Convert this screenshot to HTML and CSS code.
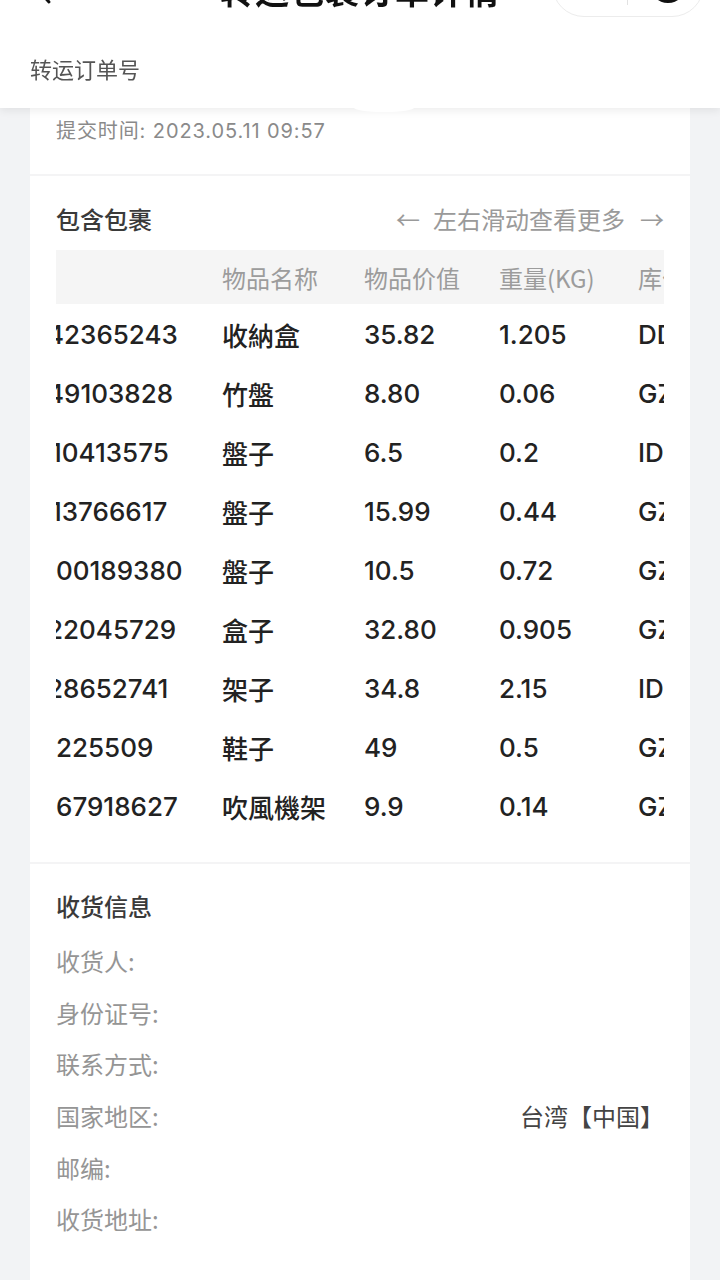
FILE: index.html
```html
<!DOCTYPE html>
<html lang="zh-CN">
<head>
<meta charset="utf-8">
<title>转运订单详情</title>
<link rel="stylesheet" href="styles.css">
</head>
<body>
<header class="topbar">
  <div class="nav">
    <svg class="back" width="24" height="40" viewBox="0 0 24 40"><path d="M17 8 L6 20 L17 32" fill="none" stroke="#111" stroke-width="3" stroke-linecap="round" stroke-linejoin="round"/></svg>
    <h1 class="nav-title">转运包裹订单详情</h1>
    <div class="capsule">
      <span class="cap-dots"><i></i><i class="big"></i><i></i></span>
      <span class="cap-sep"></span>
      <span class="cap-ring"><i></i></span>
    </div>
  </div>
  <div class="order-no">转运订单号</div>
  <span class="pull"></span>
</header>

<main class="card">
  <section class="sec sec-time">
    <p class="time">提交时间: 2023.05.11 09:57</p>
  </section>

  <section class="sec sec-pkg">
    <div class="sec-head">
      <h2 class="sec-title">包含包裹</h2>
      <span class="hint"><span class="arr">←</span>左右滑动查看更多<span class="arr">→</span></span>
    </div>
    <div class="tbl-wrap">
      <div class="tbl">
        <div class="th th-id"></div><div class="th">物品名称</div><div class="th">物品价值</div><div class="th">重量(KG)</div><div class="th">库位</div>

        <div class="td td-id">42365243</div><div class="td">收納盒</div><div class="td">35.82</div><div class="td">1.205</div><div class="td">DD</div>
        <div class="td td-id">49103828</div><div class="td">竹盤</div><div class="td">8.80</div><div class="td">0.06</div><div class="td">GZ</div>
        <div class="td td-id part">10413575</div><div class="td">盤子</div><div class="td">6.5</div><div class="td">0.2</div><div class="td">ID</div>
        <div class="td td-id part">13766617</div><div class="td">盤子</div><div class="td">15.99</div><div class="td">0.44</div><div class="td">GZ</div>
        <div class="td td-id full">00189380</div><div class="td">盤子</div><div class="td">10.5</div><div class="td">0.72</div><div class="td">GZ</div>
        <div class="td td-id">22045729</div><div class="td">盒子</div><div class="td">32.80</div><div class="td">0.905</div><div class="td">GZ</div>
        <div class="td td-id">28652741</div><div class="td">架子</div><div class="td">34.8</div><div class="td">2.15</div><div class="td">ID</div>
        <div class="td td-id full">225509</div><div class="td">鞋子</div><div class="td">49</div><div class="td">0.5</div><div class="td">GZ</div>
        <div class="td td-id full">67918627</div><div class="td">吹風機架</div><div class="td">9.9</div><div class="td">0.14</div><div class="td">GZ</div>
      </div>
    </div>
  </section>

  <section class="sec sec-recv">
    <h2 class="sec-title">收货信息</h2>
    <div class="fields">
      <div class="field"><span class="label">收货人:</span><span class="value"></span></div>
      <div class="field"><span class="label">身份证号:</span><span class="value"></span></div>
      <div class="field"><span class="label">联系方式:</span><span class="value"></span></div>
      <div class="field"><span class="label">国家地区:</span><span class="value">台湾【中国】</span></div>
      <div class="field"><span class="label">邮编:</span><span class="value"></span></div>
      <div class="field"><span class="label">收货地址:</span><span class="value"></span></div>
    </div>
  </section>
</main>
</body>
</html>
```

FILE: styles.css
```css
* { box-sizing: border-box; }

html, body {
  margin: 0;
  padding: 0;
}

body {
  background: #f2f3f5;
  font-family: "Inter", "Noto Sans CJK SC", sans-serif;
  color: #222;
  width: 720px;
  height: 1280px;
  overflow: hidden;
}

/* ---------- top bar ---------- */
.topbar {
  position: sticky;
  top: 0;
  z-index: 10;
  display: flow-root;
  background: #fff;
  height: 108px;
  box-shadow: 0 3px 8px rgba(0, 0, 0, 0.07);
}

.nav {
  position: relative;
  height: 40px;
  margin-top: -30px;
  display: flex;
  align-items: center;
  justify-content: center;
}

.back {
  position: absolute;
  left: 32px;
  top: 0;
}

.nav-title {
  margin: 0;
  font-family: "Noto Sans CJK SC", sans-serif;
  font-size: 34px;
  line-height: 40px;
  font-weight: 700;
  color: #111;
  letter-spacing: 1px;
}

.capsule {
  position: absolute;
  right: 16px;
  bottom: -7px;
  width: 152px;
  height: 64px;
  border: 1px solid #ececec;
  border-radius: 32px;
  background: #fff;
  display: flex;
  align-items: center;
}

.cap-dots {
  width: 74px;
  display: flex;
  justify-content: center;
  align-items: center;
  gap: 7px;
}
.cap-dots i {
  width: 7px;
  height: 7px;
  border-radius: 50%;
  background: #111;
}
.cap-dots i.big {
  width: 11px;
  height: 11px;
}

.cap-sep {
  width: 1px;
  height: 40px;
  background: #e2e2e2;
}

.cap-ring {
  margin-left: 22px;
  width: 36px;
  height: 36px;
  border: 4px solid #111;
  border-radius: 50%;
  display: flex;
  align-items: center;
  justify-content: center;
}
.cap-ring i {
  width: 10px;
  height: 10px;
  border-radius: 50%;
  background: #111;
}

.order-no {
  padding: 43px 30px 25px;
  font-family: "Noto Sans CJK SC", sans-serif;
  font-size: 22px;
  line-height: 30px;
  color: #555;
}

.pull {
  position: absolute;
  left: 354px;
  top: 103px;
  width: 60px;
  height: 9px;
  border-radius: 50%;
  background: #fff;
}

/* ---------- card ---------- */
.card {
  margin: 0 30px;
  background: #fff;
  min-height: 1200px;
}

.sec {
  padding: 0 26px;
}

.sec + .sec {
  border-top: 2px solid #f4f4f5;
}

.sec-time {
  padding-top: 9px;
  padding-bottom: 29px;
}

.time {
  margin: 0;
  font-size: 20px;
  letter-spacing: 0.9px;
  line-height: 28px;
  color: #8a8a8a;
}

.sec-title {
  margin: 0;
  font-family: "Noto Sans CJK SC", sans-serif;
  font-size: 24px;
  line-height: 34px;
  font-weight: 500;
  color: #3a3a3a;
}

/* ---------- packages ---------- */
.sec-pkg {
  padding-top: 26px;
  padding-bottom: 27px;
}

.sec-head {
  display: flex;
  justify-content: space-between;
  align-items: center;
  height: 34px;
}

.hint {
  font-family: "Noto Sans CJK SC", sans-serif;
  font-size: 24px;
  line-height: 34px;
  color: #9a9a9a;
  display: flex;
  align-items: center;
}

.arr {
  width: 24px;
  text-align: center;
}
.arr:first-child { margin-right: 13px; }
.arr:last-child { margin-left: 15px; }

.tbl-wrap {
  margin-top: 14px;
  overflow: hidden;
  width: 608px;
}

.tbl {
  display: grid;
  grid-template-columns: 175px 142px 135px 139px 120px;
  grid-template-rows: 54px;
  grid-auto-rows: 59px;
  margin-left: -9px;
  width: max-content;
}

.th {
  background: #f5f5f5;
  display: flex;
  align-items: center;
  font-family: "Noto Sans CJK SC", "Inter", sans-serif;
  font-size: 24px;
  color: #9c9c9c;
  white-space: nowrap;
}

.td {
  display: flex;
  align-items: center;
  padding-top: 1px;
  font-size: 26px;
  font-weight: 500;
  color: #222;
  white-space: nowrap;
  font-family: "Inter", "Noto Sans CJK SC", sans-serif;
}

.td-id.full {
  padding-left: 9px;
}

.td-id.part {
  padding-left: 4px;
}

/* ---------- receiver ---------- */
.sec-recv {
  padding-top: 25px;
  padding-bottom: 40px;
}

.fields {
  margin-top: 12px;
}

.field {
  height: 51.6px;
  display: flex;
  align-items: center;
  justify-content: space-between;
  font-family: "Noto Sans CJK SC", "Inter", sans-serif;
  font-size: 24px;
}

.label {
  color: #959595;
}

.value {
  color: #444;
  font-size: 24px;
}
```
